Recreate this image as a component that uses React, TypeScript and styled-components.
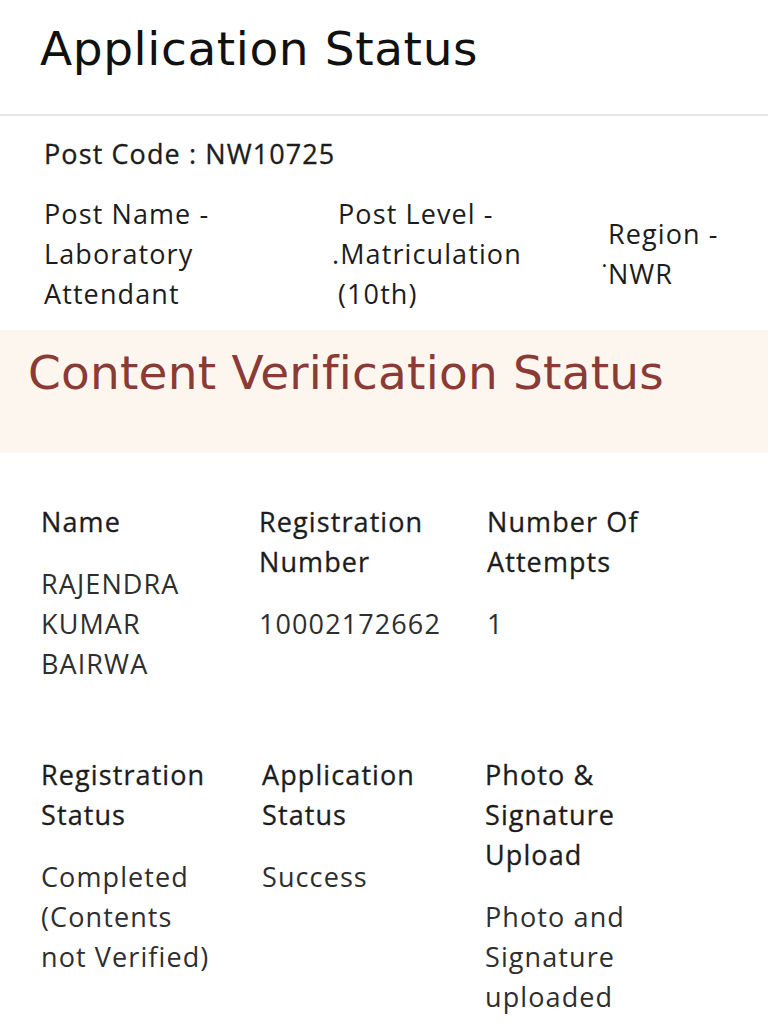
import styled, { createGlobalStyle } from "styled-components";

const colors = {
  text: '#2e2e2e',
  label: '#1c1c1c',
  rule: '#e6e6e6',
  band: '#fdf6ee',
  maroon: '#8a3b36',
}

const GlobalStyle = createGlobalStyle`
  html, body {
    margin: 0;
    padding: 0;
    background: #fff;
  }
  body {
    font-family: "Open Sans", Lato, sans-serif;
    color: ${colors.text};
  }
`;

const Page = styled.div`
  width: 768px;
  min-height: 1024px;
  overflow: hidden;
`;

const TopBar = styled.header`
  height: 116px;
  padding: 0 40px;
  border-bottom: 2px solid ${colors.rule};
  box-sizing: border-box;
  display: flex;
  align-items: flex-start;
`;

const Heading = styled.h1`
  margin: 21px 0 0;
  font-family: "DejaVu Sans", "Noto Sans", sans-serif;
  font-weight: 400;
  font-size: 47px;
  letter-spacing: 0.6px;
  line-height: 56px;
  color: #111;
`;

const PostInfo = styled.section`
  padding: 18px 0 16px 44px;
  font-size: 27px;
  letter-spacing: 1.1px;
  line-height: 40px;
`;

const PostCode = styled.div`
  font-weight: 500;
  -webkit-text-stroke: 0.3px ${colors.label};
  color: ${colors.label};
  margin-bottom: 20px;
`;

const PostGrid = styled.div`
  display: grid;
  grid-template-columns: 294px 270px 1fr;
  align-items: center;
`;

const PostCell = styled.div`
  color: ${colors.label};
`;

// a leading stray mark that sits left of the column edge
const Hang = styled.div<{ $by: number }>`
  margin-left: -${p => p.$by}px;
`;

const Band = styled.div`
  background: ${colors.band};
  height: 123px;
  padding: 18px 0 0 28px;
  box-sizing: border-box;
`;

const BandTitle = styled.h2`
  margin: 0;
  font-family: "DejaVu Sans", "Noto Sans", sans-serif;
  font-weight: 400;
  font-size: 47px;
  letter-spacing: 0.2px;
  line-height: 50px;
  color: ${colors.maroon};
`;

const Details = styled.section<{ $top: number }>`
  padding: ${p => p.$top}px 0 0 41px;
`;

const DetailGrid = styled.div<{ $cols: string }>`
  display: grid;
  grid-template-columns: ${p => p.$cols};
  align-items: start;
`;

const Field = styled.div`
  display: flex;
  flex-direction: column;
  gap: 22px;
  font-size: 27px;
  letter-spacing: 1.1px;
  line-height: 40px;
`;

const Label = styled.div`
  font-weight: 500;
  -webkit-text-stroke: 0.3px ${colors.label};
  color: ${colors.label};
`;

const Value = styled.div`
  color: ${colors.text};
`;

type Item = { label: string[]; value: string[] };

const firstRow: Item[] = [
  { label: ['Name'], value: ['RAJENDRA', 'KUMAR', 'BAIRWA'] },
  { label: ['Registration', 'Number'], value: ['10002172662'] },
  { label: ['Number Of', 'Attempts'], value: ['1'] },
];

const secondRow: Item[] = [
  { label: ['Registration', 'Status'], value: ['Completed', '(Contents', 'not Verified)'] },
  { label: ['Application', 'Status'], value: ['Success'] },
  { label: ['Photo &', 'Signature', 'Upload'], value: ['Photo and', 'Signature', 'uploaded'] },
];

const Lines = ({ lines }: { lines: string[] }) => (
  <>
    {lines.map((l, i) => <div key={i}>{l}</div>)}
  </>
);

const DetailRow = ({ items, cols, top }: { items: Item[]; cols: string; top: number }) => (
  <Details $top={top}>
    <DetailGrid $cols={cols}>
      {items.map((it, i) => (
        <Field key={i}>
          <Label><Lines lines={it.label} /></Label>
          <Value><Lines lines={it.value} /></Value>
        </Field>
      ))}
    </DetailGrid>
  </Details>
);

export default function App() {
  return (
    <Page>
      <GlobalStyle />
      <TopBar>
        <Heading>Application Status</Heading>
      </TopBar>
      <PostInfo>
        <PostCode>Post Code : NW10725</PostCode>
        <PostGrid>
          <PostCell>
            <div>Post Name -</div>
            <div>Laboratory</div>
            <div>Attendant</div>
          </PostCell>
          <PostCell>
            <div>Post Level -</div>
            <Hang $by={6}>.Matriculation</Hang>
            <div>(10th)</div>
          </PostCell>
          <PostCell>
            <div>Region -</div>
            <Hang $by={6}>˙NWR</Hang>
          </PostCell>
        </PostGrid>
      </PostInfo>
      <Band>
        <BandTitle>Content Verification Status</BandTitle>
      </Band>
      <DetailRow items={firstRow} cols="218px 228px 1fr" top={49} />
      <DetailRow items={secondRow} cols="221px 223px 1fr" top={71} />
    </Page>
  );
}
